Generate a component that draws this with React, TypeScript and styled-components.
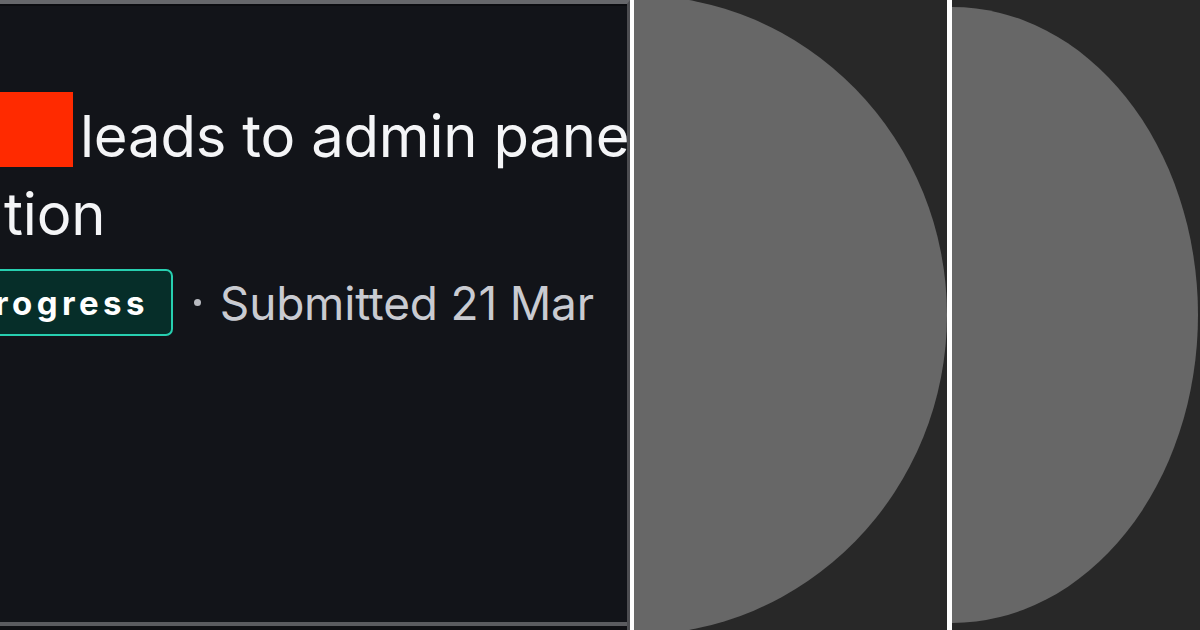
import React from 'react'
import styled, {createGlobalStyle} from 'styled-components'

const Global = createGlobalStyle`
  html, body {
    margin: 0;
    padding: 0;
    background: #ffffff;
  }
  body {
    font-family: Inter, "Noto Sans", "Liberation Sans", sans-serif;
  }
`;

const Strip = styled.div`
  display: flex;
  width: 1200px;
  height: 630px;
  overflow: hidden;
  background: #ffffff;
  gap: 4px;
`;

const Frame = styled.div`
  flex: 0 0 630px;
  min-width: 0;
  height: 630px;
  box-sizing: border-box;
  background: #0f1014;
  border-top: 4px solid #66676b;
  border-right: 3px solid #4c4d51;
  padding-bottom: 4px;
  display: flex;
`;

const Card = styled.div`
  flex: 1;
  min-width: 0;
  background: #121419;
  border-top: 2px solid #0b0c10;
  border-bottom: 4px solid #5b5c60;
  overflow: hidden;
  padding-top: 91px;
  display: flex;
  flex-direction: column;
`;

const Title = styled.div`
  color: #f4f5f7;
  font-size: 58px;
  line-height: 78px;
  letter-spacing: -0.2px;
  font-weight: 400;
`;

const Line = styled.div<{$shift: number}>`
  display: flex;
  align-items: center;
  white-space: nowrap;
  margin-left: ${p => p.$shift}px;
`;

const Redact = styled.span`
  display: inline-block;
  flex: 0 0 93px;
  align-self: flex-start;
  height: 75px;
  margin-top: -5px;
  background: #ff2a00;
  margin-right: 7px;
`;

const Meta = styled.div`
  display: flex;
  align-items: center;
  margin-top: 16px;
  margin-left: -103px;
  white-space: nowrap;
`;

const Badge = styled.span`
  display: inline-flex;
  flex: 0 0 auto;
  align-items: center;
  height: 67px;
  box-sizing: border-box;
  padding: 0 22px 0 20px;
  border: 2px solid #27cfb0;
  border-radius: 7px;
  background: #062e29;
  color: #ffffff;
  font-size: 33px;
  font-weight: 700;
  letter-spacing: 4.4px;
`;

const Dot = styled.span`
  flex: 0 0 7px;
  height: 7px;
  border-radius: 50%;
  background: #b8bac0;
  margin: 0 19px 0 21px;
`;

const Submitted = styled.span`
  flex: 0 0 auto;
  color: #c9cbd1;
  font-size: 46px;
  letter-spacing: -0.2px;
`;

const Thumb = styled.div<{$w: number}>`
  flex: 0 0 ${p => p.$w}px;
  height: 630px;
  background: #282828;
  display: flex;
  align-items: center;
`;

const Half = styled.div<{$w: number; $h: number}>`
  width: ${p => p.$w}px;
  height: ${p => p.$h}px;
  flex: 0 0 auto;
  background: #676767;
  border-radius: 0 100% 100% 0 / 0 50% 50% 0;
`;

export default function App() {
  return (
    <>
      <Global />
      <Strip>
        <Frame>
          <Card>
            <Title>
              <Line $shift={-20}>
                <Redact />
                leads to admin panel
              </Line>
              <Line $shift={-30}>ntion</Line>
            </Title>
            <Meta>
              <Badge>In progress</Badge>
              <Dot />
              <Submitted>Submitted 21 Mar</Submitted>
            </Meta>
          </Card>
        </Frame>
        <Thumb $w={313}>
          <Half $w={313} $h={640} />
        </Thumb>
        <Thumb $w={249} style={{marginLeft: 1}}>
          <Half $w={246} $h={616} />
        </Thumb>
      </Strip>
    </>
  )
}
